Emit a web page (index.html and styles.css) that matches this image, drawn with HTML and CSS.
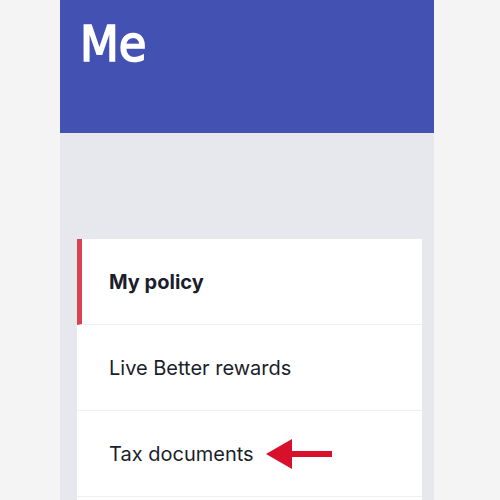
FILE: index.html
```html
<!DOCTYPE html>
<html>
<head>
<meta charset="utf-8">
<link rel="stylesheet" href="styles.css">
</head>
<body>
<div class="phone">
  <header class="header"><h1 class="title">Me</h1></header>
  <main class="content">
    <ul class="menu">
      <li class="item active">My policy</li>
      <li class="item">Live Better rewards</li>
      <li class="item">Tax documents
        <svg class="arrow" width="66" height="32" viewBox="0 0 66 32"><path d="M0 16 L26 1 L26 13 L66 13 L66 19 L26 19 L26 31 Z" fill="#d9102b"/></svg>
      </li>
      <li class="item"></li>
    </ul>
  </main>
</div>
</body>
</html>
```
FILE: styles.css
```css
html, body { margin: 0; padding: 0; }
body {
  background: #f4f4f4;
  font-family: Inter, "Liberation Sans", sans-serif;
  height: 500px;
  overflow: hidden;
}
.phone {
  margin-left: 60px;
  width: 374px;
  height: 500px;
  overflow: hidden;
  background: #e7e8ee;
}
.header {
  background: #4352b2;
  height: 133px;
  padding: 18px 0 0 20px;
  box-sizing: border-box;
}
.title {
  margin: 0;
  color: #fff;
  font-family: "DejaVu Sans Condensed", "DejaVu Sans", sans-serif;
  font-stretch: condensed;
  font-weight: 400;
  font-size: 50px;
  line-height: 52px;
  -webkit-text-stroke: 1.6px #fff;
}
.content {
  padding: 106px 12px 0 17px;
}
.menu {
  list-style: none;
  margin: 0;
  padding: 0;
  background: #fff;
}
.item {
  height: 85px;
  border-bottom: 1px solid #eeeef3;
  display: flex;
  align-items: center;
  padding-left: 32px;
  font-size: 20px;
  color: #1b1e2b;
  gap: 12px;
}
.item.active {
  font-weight: 700;
  border-left: 5px solid #d8434f;
  padding-left: 27px;
}
.arrow { flex: none; }
```
